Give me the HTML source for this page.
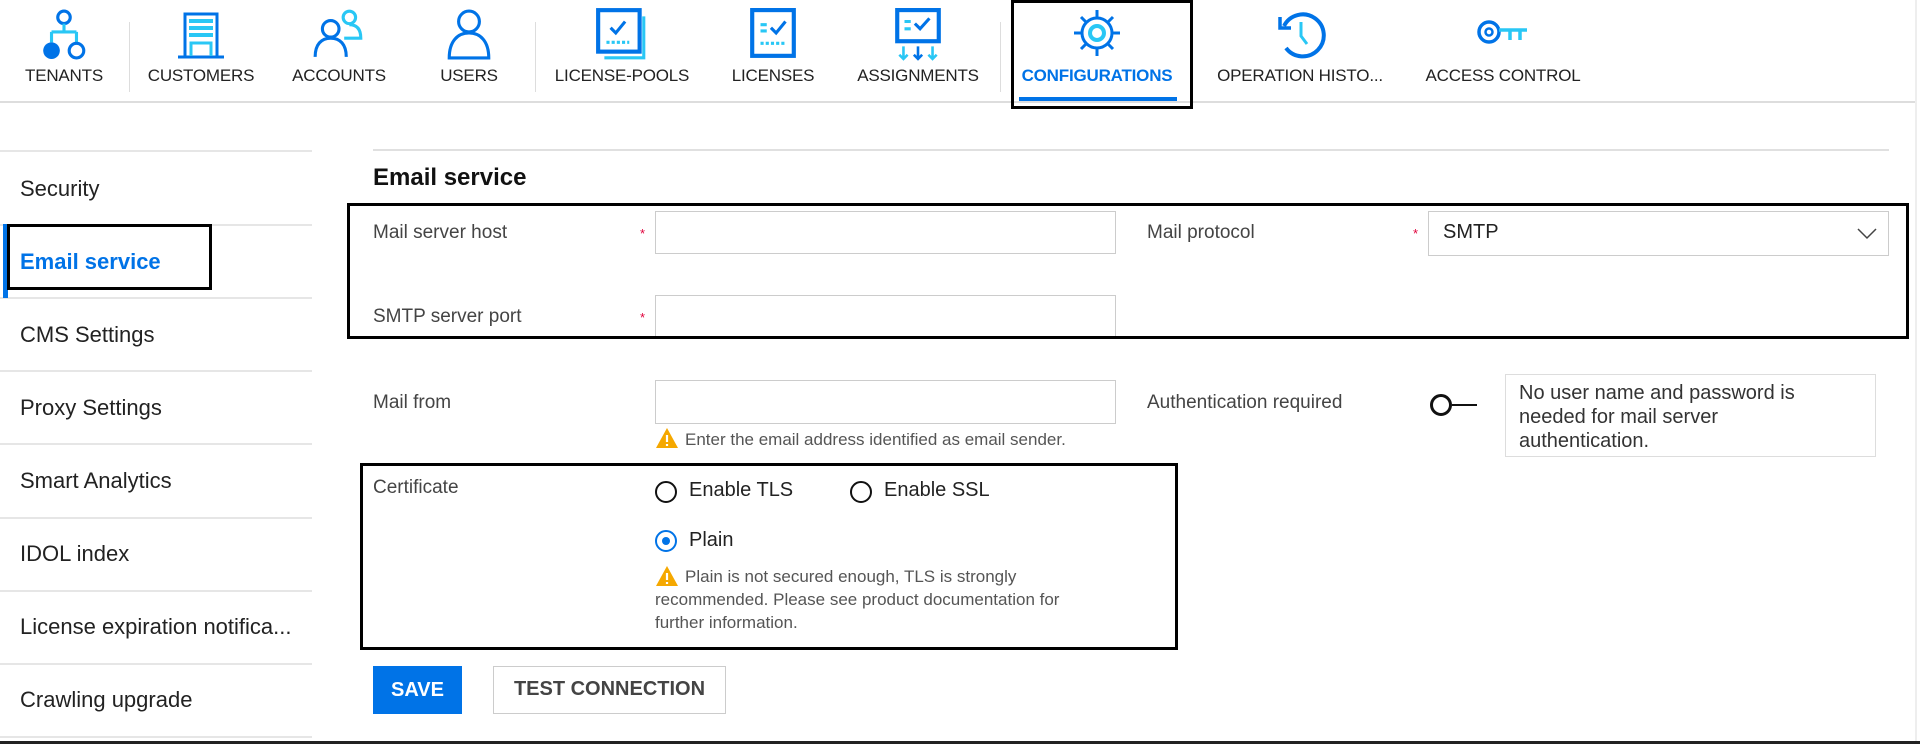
<!DOCTYPE html>
<html><head><meta charset="utf-8"><style>
*{margin:0;padding:0;box-sizing:border-box}
body{width:1920px;height:744px;background:#fff;position:relative;overflow:hidden;font-family:"Liberation Sans",sans-serif;color:#222}
.a{position:absolute}
.nl{position:absolute;top:66px;font-size:17px;color:#222;transform:translateX(-50%);white-space:nowrap;letter-spacing:-0.2px}
.ic{position:absolute;top:8px;transform:translateX(-50%)}
.sep{position:absolute;top:22px;width:1px;height:70px;background:#ddd}
.sl{position:absolute;left:0;width:312px;height:2px;background:#e6e6e6}
.st{position:absolute;left:20px;font-size:22px;color:#222;white-space:nowrap}
.lb{position:absolute;font-size:19px;color:#444}
.ast{position:absolute;color:#e0003a;font-size:13px}
.inp{position:absolute;border:1px solid #ccc;background:#fff}
.box{position:absolute;border:3px solid #000}
.rad{position:absolute;width:22px;height:22px;border:2.5px solid #111;border-radius:50%}
.rt{position:absolute;font-size:20px;color:#222}
.warn{position:absolute;font-size:17px;color:#555;line-height:23px}
</style></head><body>
<!-- nav -->
<div class="a" style="left:0;top:101px;width:1916px;height:2px;background:#ddd"></div>
<div class="a" style="left:1915px;top:0;width:2px;height:744px;background:#eee"></div>
<div class="sep" style="left:129px"></div><div class="sep" style="left:535px"></div><div class="sep" style="left:1000px"></div>

<svg class="ic" style="left:64px" width="52" height="52" viewBox="0 0 48 50"><circle cx="24" cy="9" r="6" fill="none" stroke="#0073e7" stroke-width="3"/><path d="M24 15v8M12 23h24M12 23v10M36 23v10" stroke="#29c7f5" stroke-width="3" fill="none"/><circle cx="12" cy="41" r="8" fill="#0073e7"/><circle cx="36" cy="41" r="7" fill="none" stroke="#0073e7" stroke-width="3"/></svg>
<svg class="ic" style="left:201px" width="50" height="52" viewBox="0 0 50 50"><path d="M9 47V5h32v42" fill="none" stroke="#0073e7" stroke-width="3"/><path d="M2 48h46" stroke="#0073e7" stroke-width="3"/><path d="M13 12h24M13 19h24M13 26h24" stroke="#29c7f5" stroke-width="4"/><path d="M15 47V34h20v13" fill="none" stroke="#29c7f5" stroke-width="3"/></svg>
<svg class="ic" style="left:339px" width="56" height="52" viewBox="0 0 54 50"><circle cx="19" cy="20" r="8" fill="none" stroke="#0073e7" stroke-width="3"/><path d="M4 47c0-12 6-18 15-18s15 6 15 18" fill="none" stroke="#0073e7" stroke-width="3"/><circle cx="37" cy="9" r="6" fill="none" stroke="#29c7f5" stroke-width="3"/><path d="M32 29h16c0-9-4-13-11-13" fill="none" stroke="#29c7f5" stroke-width="3"/></svg>
<svg class="ic" style="left:469px" width="48" height="52" viewBox="0 0 46 50"><circle cx="23" cy="13" r="10" fill="none" stroke="#0073e7" stroke-width="3"/><path d="M4 48c0-16 8-24 19-24s19 8 19 24z" fill="none" stroke="#0073e7" stroke-width="3"/></svg>
<svg class="ic" style="left:622px" width="56" height="52" viewBox="0 0 54 50"><rect x="4" y="2" width="40" height="40" fill="none" stroke="#0073e7" stroke-width="4"/><path d="M48 8v40H10" fill="none" stroke="#29c7f5" stroke-width="3"/><path d="M16 19l5 5 9-11" fill="none" stroke="#0073e7" stroke-width="3"/><path d="M12 33h22" stroke="#29c7f5" stroke-width="3" stroke-dasharray="3 2"/></svg>
<svg class="ic" style="left:773px" width="50" height="52" viewBox="0 0 48 50"><rect x="4" y="2" width="40" height="44" fill="none" stroke="#0073e7" stroke-width="4"/><path d="M12 16h6M12 22h6" stroke="#29c7f5" stroke-width="3"/><path d="M22 19l5 5 9-11" fill="none" stroke="#0073e7" stroke-width="3"/><path d="M12 34h24" stroke="#29c7f5" stroke-width="3" stroke-dasharray="3 2"/></svg>
<svg class="ic" style="left:918px" width="50" height="54" viewBox="0 0 48 52"><rect x="4" y="2" width="40" height="30" fill="none" stroke="#0073e7" stroke-width="4"/><path d="M11 13h6M11 20h6" stroke="#29c7f5" stroke-width="3"/><path d="M21 15l5 5 9-10" fill="none" stroke="#0073e7" stroke-width="3"/><path d="M10 37v12M6 45l4 4 4-4M38 37v12M34 45l4 4 4-4" fill="none" stroke="#29c7f5" stroke-width="2.5"/><path d="M24 37v12M20 45l4 4 4-4" fill="none" stroke="#0073e7" stroke-width="2.5"/></svg>
<svg class="ic" style="left:1097px" width="50" height="50" viewBox="0 0 50 50"><circle cx="25" cy="25" r="15" fill="none" stroke="#0073e7" stroke-width="3"/><circle cx="25" cy="25" r="7" fill="none" stroke="#29c7f5" stroke-width="4"/><path d="M25 2v8M25 40v8M2 25h8M40 25h8M9 9l5 5M36 36l5 5M41 9l-5 5M9 41l5-5" stroke="#0073e7" stroke-width="3"/></svg>
<svg class="ic" style="left:1300px" width="52" height="52" viewBox="0 0 52 52"><path d="M10 18A21 21 0 1 1 12 40" fill="none" stroke="#0073e7" stroke-width="4"/><path d="M6 9v11h11" fill="none" stroke="#0073e7" stroke-width="3.5"/><path d="M27 14v14l6 8" fill="none" stroke="#29c7f5" stroke-width="3"/></svg>
<svg class="ic" style="left:1503px;top:18px" width="54" height="30" viewBox="0 0 54 30"><circle cx="13" cy="14" r="10" fill="none" stroke="#0073e7" stroke-width="3.5"/><circle cx="13" cy="14" r="3.5" fill="none" stroke="#0073e7" stroke-width="2.5"/><path d="M23 12h28M34 12v10M44 12v10" stroke="#29c7f5" stroke-width="3.5"/></svg>

<div class="nl" style="left:64px">TENANTS</div>
<div class="nl" style="left:201px">CUSTOMERS</div>
<div class="nl" style="left:339px">ACCOUNTS</div>
<div class="nl" style="left:469px">USERS</div>
<div class="nl" style="left:622px">LICENSE-POOLS</div>
<div class="nl" style="left:773px">LICENSES</div>
<div class="nl" style="left:918px">ASSIGNMENTS</div>
<div class="nl" style="left:1097px;color:#0073e7;font-weight:bold">CONFIGURATIONS</div>
<div class="nl" style="left:1300px">OPERATION HISTO...</div>
<div class="nl" style="left:1503px">ACCESS CONTROL</div>
<div class="a" style="left:1019px;top:97px;width:158px;height:4px;background:#0073e7"></div>
<div class="box" style="left:1011px;top:0;width:182px;height:109px"></div>

<!-- sidebar -->
<div class="sl" style="top:150px"></div><div class="sl" style="top:224px"></div><div class="sl" style="top:297px"></div><div class="sl" style="top:370px"></div><div class="sl" style="top:443px"></div><div class="sl" style="top:517px"></div><div class="sl" style="top:590px"></div><div class="sl" style="top:663px"></div><div class="sl" style="top:736px"></div>
<div class="a" style="left:3px;top:224px;width:5px;height:74px;background:#0073e7"></div>
<div class="st" style="top:176px">Security</div>
<div class="st" style="top:249px;color:#0073e7;font-weight:bold">Email service</div>
<div class="st" style="top:322px">CMS Settings</div>
<div class="st" style="top:395px">Proxy Settings</div>
<div class="st" style="top:468px">Smart Analytics</div>
<div class="st" style="top:541px">IDOL index</div>
<div class="st" style="top:614px">License expiration notifica...</div>
<div class="st" style="top:687px">Crawling upgrade</div>
<div class="box" style="left:7px;top:224px;width:205px;height:66px"></div>

<!-- main -->
<div class="a" style="left:373px;top:149px;width:1516px;height:2px;background:#e0e0e0"></div>
<div class="a" style="left:373px;top:164px;font-size:24px;font-weight:bold;color:#111">Email service</div>

<div class="lb" style="left:373px;top:222px">Mail server host</div><div class="ast" style="left:640px;top:226px">*</div>
<div class="inp" style="left:655px;top:211px;width:461px;height:43px"></div>
<div class="lb" style="left:1147px;top:222px">Mail protocol</div><div class="ast" style="left:1413px;top:226px">*</div>
<div class="inp" style="left:1428px;top:211px;width:461px;height:45px"></div>
<div class="a" style="left:1443px;top:221px;font-size:20px;color:#222">SMTP</div>
<svg class="a" style="left:1857px;top:228px" width="20" height="12"><path d="M1 1l9 9 9-9" fill="none" stroke="#444" stroke-width="1.5"/></svg>
<div class="lb" style="left:373px;top:306px">SMTP server port</div><div class="ast" style="left:640px;top:310px">*</div>
<div class="inp" style="left:655px;top:295px;width:461px;height:44px"></div>
<div class="box" style="left:347px;top:203px;width:1562px;height:136px"></div>

<div class="lb" style="left:373px;top:392px">Mail from</div>
<div class="inp" style="left:655px;top:380px;width:461px;height:44px"></div>
<svg class="a" style="left:655px;top:427px" width="24" height="22"><path d="M12 1L23 21H1z" fill="#f5a800"/><path d="M12 8v7M12 17v2" stroke="#fff" stroke-width="2.2"/></svg>
<div class="warn" style="left:685px;top:428px">Enter the email address identified as email sender.</div>
<div class="lb" style="left:1147px;top:392px">Authentication required</div>
<div class="rad" style="left:1430px;top:394px;border-width:3px"></div>
<div class="a" style="left:1452px;top:404px;width:25px;height:2px;background:#111"></div>
<div class="a" style="left:1505px;top:374px;width:371px;height:83px;border:1px solid #ddd"></div>
<div class="a" style="left:1519px;top:381px;font-size:20px;color:#333;line-height:24px;width:300px">No user name and password is needed for mail server authentication.</div>

<div class="lb" style="left:373px;top:477px">Certificate</div>
<div class="rad" style="left:655px;top:481px"></div><div class="rt" style="left:689px;top:479px">Enable TLS</div>
<div class="rad" style="left:850px;top:481px"></div><div class="rt" style="left:884px;top:479px">Enable SSL</div>
<div class="rad" style="left:655px;top:530px;border-color:#0073e7"></div><div class="a" style="left:662px;top:537px;width:8px;height:8px;border-radius:50%;background:#0073e7"></div>
<div class="rt" style="left:689px;top:529px">Plain</div>
<svg class="a" style="left:655px;top:565px" width="24" height="22"><path d="M12 1L23 21H1z" fill="#f5a800"/><path d="M12 8v7M12 17v2" stroke="#fff" stroke-width="2.2"/></svg>
<div class="warn" style="left:655px;top:565px;width:445px;text-indent:30px">Plain is not secured enough, TLS is strongly recommended. Please see product documentation for further information.</div>
<div class="box" style="left:360px;top:463px;width:818px;height:187px"></div>

<div class="a" style="left:373px;top:666px;width:89px;height:48px;background:#0073e7;color:#fff;font-weight:bold;font-size:20px;line-height:48px;text-align:center">SAVE</div>
<div class="a" style="left:493px;top:666px;width:233px;height:48px;border:1.5px solid #ccc;color:#444;font-weight:bold;font-size:20px;line-height:45px;text-align:center">TEST CONNECTION</div>

<div class="a" style="left:0;top:741px;width:1920px;height:3px;background:#222"></div>
</body></html>
